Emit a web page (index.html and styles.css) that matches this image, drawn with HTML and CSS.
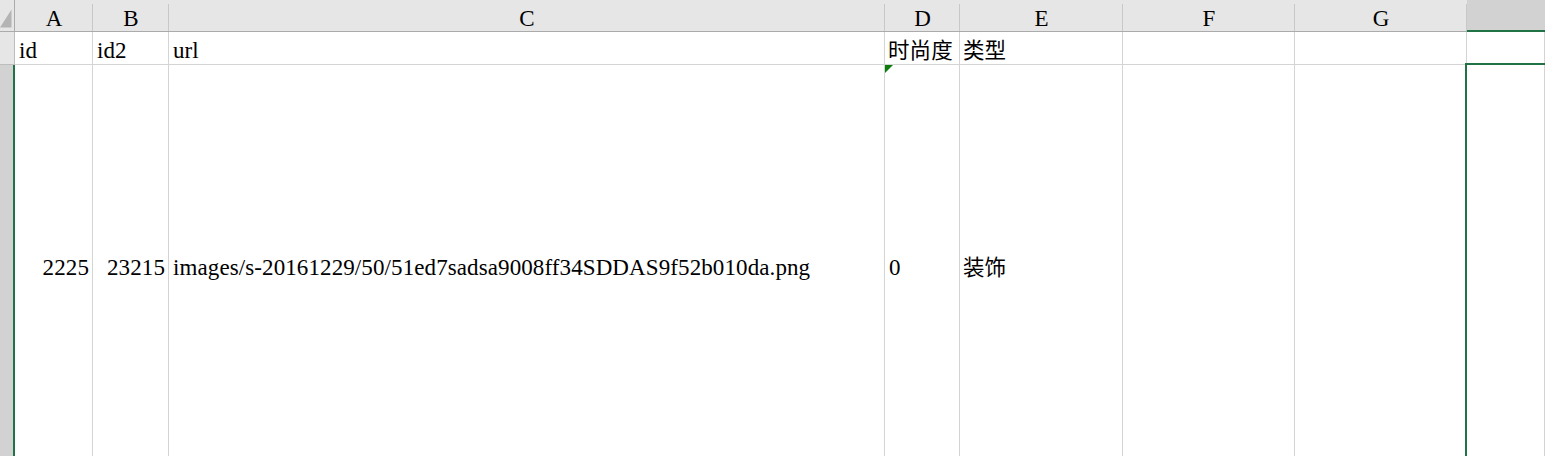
FILE: index.html
```html
<!DOCTYPE html>
<html lang="zh">
<head>
<meta charset="utf-8">
<title>Sheet</title>
<link rel="stylesheet" href="styles.css">
</head>
<body>
<div class="sheet">
  <div class="corner"><svg class="corner-tri" width="15" height="31" viewBox="0 0 15 31"><polygon points="0,27.5 11.5,27.5 11.5,9.5" fill="#b4b4b4"/></svg></div>
  <div class="colhead">A</div>
  <div class="colhead">B</div>
  <div class="colhead">C</div>
  <div class="colhead">D</div>
  <div class="colhead">E</div>
  <div class="colhead">F</div>
  <div class="colhead">G</div>
  <div class="colhead colhead-sel"></div>

  <div class="rowhead"></div>
  <div class="cell">id</div>
  <div class="cell">id2</div>
  <div class="cell">url</div>
  <div class="cell cjk">时尚度</div>
  <div class="cell cjk">类型</div>
  <div class="cell"></div>
  <div class="cell"></div>
  <div class="cell"></div>

  <div class="rowhead rowhead-sel"></div>
  <div class="cell tall num">2225</div>
  <div class="cell tall num">23215</div>
  <div class="cell tall">images/s-20161229/50/51ed7sadsa9008ff34SDDAS9f52b010da.png</div>
  <div class="cell tall flagged"><span class="flag"></span>0</div>
  <div class="cell tall cjk">装饰</div>
  <div class="cell tall"></div>
  <div class="cell tall"></div>
  <div class="cell tall active"><span class="selection"></span></div>
</div>
</body>
</html>
```
FILE: styles.css
```css
html, body {
  margin: 0;
  padding: 0;
  overflow: hidden;
  background: #ffffff;
}

.sheet {
  display: grid;
  grid-template-columns: 15px 78px 76px 716px 75px 163px 172px 172px 1fr;
  grid-template-rows: 32px 33px 406px;
  font-family: "Liberation Serif", "Noto Sans CJK SC", serif;
  font-size: 23px;
  line-height: 24px;
  color: #000;
}

.sheet > div {
  box-sizing: border-box;
  min-width: 0;
  white-space: nowrap;
}

.corner {
  background: #e6e6e6;
  border-right: 1px solid #ababab;
  border-bottom: 1px solid #ababab;
}

.corner-tri {
  display: block;
}

.colhead {
  background: linear-gradient(#c8c8c8, #c8c8c8) right 4px / 1px calc(100% - 4px) no-repeat, #e6e6e6;
  border-bottom: 1px solid #ababab;
  display: flex;
  align-items: flex-end;
  justify-content: center;
  padding-bottom: 0;
}

.colhead-sel {
  background: #d2d2d2;
  border-bottom: 2px solid #217346;
}

.rowhead {
  background: #e6e6e6;
  border-right: 1px solid #bdbdbd;
  border-bottom: 1px solid #bdbdbd;
}

.rowhead-sel {
  background: #d2d2d2;
  border-right: 2px solid #217346;
}

.cell {
  border-right: 1px solid #d4d4d4;
  border-bottom: 1px solid #d4d4d4;
  display: flex;
  align-items: flex-end;
  padding: 0 3px 1px 4px;
  letter-spacing: 0.1px;
  overflow: visible;
}

.cell.cjk {
  font-size: 21.5px;
  padding-left: 3px;
}

.cell.tall {
  align-items: center;
  padding-bottom: 0;
  padding-top: 0;
}

.num {
  justify-content: flex-end;
  padding-right: 3px;
}

.flagged {
  position: relative;
}

.flag {
  position: absolute;
  left: 0;
  top: 0;
  width: 0;
  height: 0;
  border-top: 8px solid #0a7d0a;
  border-right: 8px solid transparent;
}

.active {
  position: relative;
}

.selection {
  position: absolute;
  left: -2px;
  top: -2px;
  right: -4px;
  bottom: -4px;
  border: 2px solid #217346;
}
```
